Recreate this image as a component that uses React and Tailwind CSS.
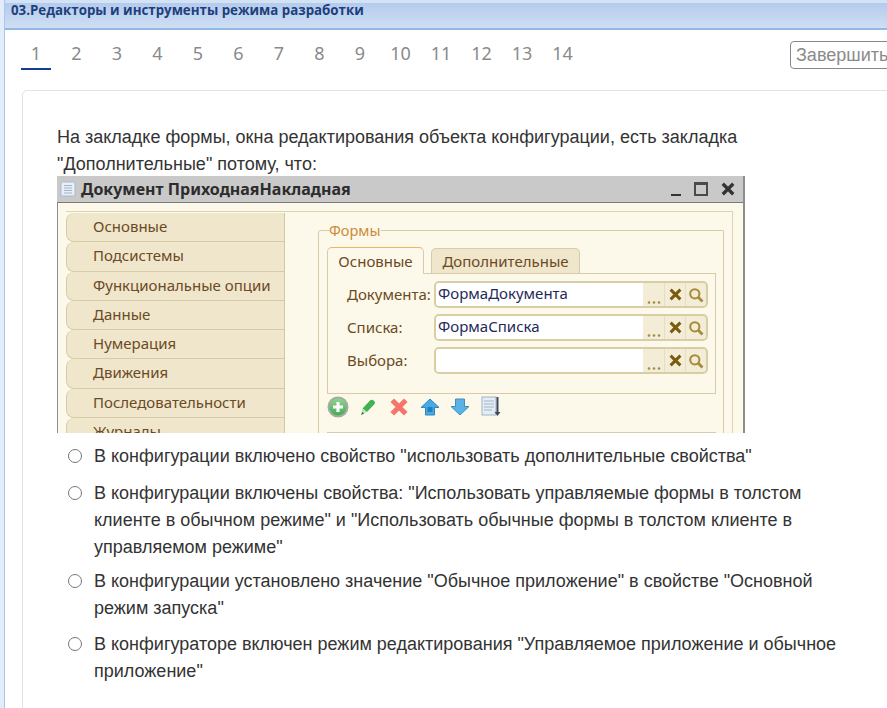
import React from "react";

const numbers = [1, 2, 3, 4, 5, 6, 7, 8, 9, 10, 11, 12, 13, 14];

const sections = [
  "Основные",
  "Подсистемы",
  "Функциональные опции",
  "Данные",
  "Нумерация",
  "Движения",
  "Последовательности",
  "Журналы",
];

const fields = [
  { label: "Документа:", value: "ФормаДокумента" },
  { label: "Списка:", value: "ФормаСписка" },
  { label: "Выбора:", value: "" },
];

const answers = [
  {
    gap: "mb-[10px]",
    lines: ['В конфигурации включено свойство "использовать дополнительные свойства"'],
  },
  {
    gap: "mb-[7px]",
    lines: [
      'В конфигурации включены свойства: "Использовать управляемые формы в толстом',
      'клиенте в обычном режиме" и "Использовать обычные формы в толстом клиенте в',
      'управляемом режиме"',
    ],
  },
  {
    gap: "mb-[9px]",
    lines: [
      'В конфигурации установлено значение "Обычное приложение" в свойстве "Основной',
      'режим запуска"',
    ],
  },
  {
    gap: "",
    lines: [
      'В конфигураторе включен режим редактирования "Управляемое приложение и обычное',
      'приложение"',
    ],
  },
];

const CloseMark = ({ className, width = 2.8 }) => (
  <svg viewBox="0 0 12 12" className={className}>
    <path d="M1.500 1.500l9 9M10.500 1.500l-9 9" stroke="currentColor" strokeWidth={width} fill="none" />
  </svg>
);

const Field = ({ label, value }) => (
  <div className="flex items-center h-[27px]">
    <span className="w-[106px] pl-[19px] text-[15px] text-[#6b4a24] whitespace-nowrap">{label}</span>
    <div className="flex w-[274px] h-[27px] border-2 border-[#d8cea6] rounded-[5px] bg-[#f3ecd6] overflow-hidden">
      <div className="w-[207px] bg-white pl-[2px] text-[15px] leading-[21px] text-[#1f2a5a]">
        {value}
      </div>
      <div className="w-[22px] flex items-end justify-center pb-[2px] border-r border-[#e6dec3]">
        <svg viewBox="0 0 14 3" className="w-[14px] h-[3px] text-[#a58c45]">
          <circle cx="2" cy="1.500" r="1.300" fill="currentColor" />
          <circle cx="7" cy="1.500" r="1.300" fill="currentColor" />
          <circle cx="12" cy="1.500" r="1.300" fill="currentColor" />
        </svg>
      </div>
      <div className="w-[21px] flex items-center justify-center border-r border-[#e6dec3]">
        <CloseMark className="w-[13px] h-[13px] text-[#7a5c10]" />
      </div>
      <div className="flex-1 flex items-center justify-center">
        <svg viewBox="0 0 16 16" className="w-[16px] h-[16px] text-[#a88a3c]">
          <circle cx="6.800" cy="6.800" r="4.600" stroke="currentColor" strokeWidth="2" fill="none" />
          <path d="M10 10l4.500 4.500" stroke="currentColor" strokeWidth="2.800" fill="none" />
        </svg>
      </div>
    </div>
  </div>
);

const Toolbar = () => (
  <div className="flex items-center h-[38px] pb-[13px]">
    <svg viewBox="0 0 22 22" className="w-[22px] h-[22px]">
      <defs>
        <linearGradient id="addFill" x1="0" y1="0" x2="0" y2="1">
          <stop offset="0" stopColor="#8fd48f" />
          <stop offset="1" stopColor="#45ab52" />
        </linearGradient>
      </defs>
      <circle cx="11" cy="11" r="10.500" fill="#a3ad9f" />
      <circle cx="11" cy="11" r="8.500" fill="url(#addFill)" />
      <path d="M11 6v10M6 11h10" stroke="#fff" strokeWidth="3.200" />
    </svg>
    <svg viewBox="0 0 18 18" className="w-[18px] h-[18px] ml-[10px]">
      <path d="M3.500 10.500L11 2.500c1-1 2-1 3.500 0s2 2.500 1 3.500L8 14z" fill="#3fb34f" />
      <path d="M3.500 10.500L8 14l-6 3z" fill="#bfe3b8" />
      <path d="M2 17l1.500-3 1.500 1.500z" fill="#1f6a2b" />
    </svg>
    <CloseMark className="w-[18px] h-[18px] ml-[13px] text-[#f6756b]" width={3.400} />
    <svg viewBox="0 0 20 18" className="w-[20px] h-[18px] ml-[12px]">
      <path d="M10 1l9 8.500h-4.500V17h-9V9.500H1z" fill="#49a9e4" stroke="#2f86ba" />
      <path d="M7.500 9h5v5h-5z" fill="#1f7fc4" />
    </svg>
    <svg viewBox="0 0 20 18" className="w-[20px] h-[18px] ml-[10px]">
      <path d="M10 17l9-8.500h-4.500V1h-9v7.500H1z" fill="#5bb2e8" stroke="#3d8fc2" />
    </svg>
    <svg viewBox="0 0 20 21" className="w-[20px] h-[21px] ml-[11px]">
      <rect x="1" y="1" width="14" height="18" fill="#e4edf5" stroke="#9fb1c4" />
      <path d="M3 5h10M3 8h10M3 11h10M3 14h8" stroke="#a3b5c8" />
      <path d="M16.500 1v16" stroke="#3d4a5a" strokeWidth="2" />
      <path d="M13.500 16h6l-3 4z" fill="#3d4a5a" />
    </svg>
  </div>
);

const ConfigWindow = () => (
  <div className="w-[688px] h-[257px] overflow-hidden border-r-2 border-[#8d8d8d] font-['Noto_Sans',sans-serif]">
    <div className="h-[27px] flex items-center bg-[#c9c9c9] border-b border-[#7b7b7b] pl-[3px] pr-[8px]">
      <svg viewBox="0 0 16 16" className="w-[16px] h-[16px]">
        <rect x="1" y="1" width="14" height="14" rx="1" fill="#e8eff6" stroke="#a9bbcc" />
        <path d="M4 4.500h8M4 7h8M4 9.500h8M4 12h8" stroke="#a2b4c6" />
      </svg>
      <span className="ml-[5px] text-[16px] font-bold text-[#2c2c2c] whitespace-nowrap">
        Документ ПриходнаяНакладная
      </span>
      <div className="ml-auto flex items-center gap-[13px]">
        <span className="w-[10px] h-[2px] mt-[12px] bg-[#333]" />
        <span className="w-[14px] h-[14px] border-2 border-t-[3px] border-[#4a4a4a]" />
        <CloseMark className="w-[14px] h-[14px] text-[#333]" />
      </div>
    </div>
    <div className="flex h-[230px] bg-[#fdf9ea] border-l border-[#8d8d8d] pl-[8px] pt-[8px] pr-[10px]">
      <div className="flex-1 flex border border-l-0 border-[#dcd3b0] border-b-0 pt-px">
        <ul className="w-[219px] shrink-0 border-r border-[#cfc6a4]">
          {sections.map((name) => (
            <li
              key={name}
              className="h-[29.300px] pl-[26px] text-[15px] leading-[26px] text-[#6b4a24] bg-[#efe6cc] border-l border-b border-[#d5cba8] rounded-l-[8px] whitespace-nowrap"
            >
              {name}
            </li>
          ))}
        </ul>
        <div className="flex-1 pl-[33px] pr-[8px] pt-[9px]">
          <fieldset className="border border-[#d6ccab] rounded-tl-[3px] pl-[8px] pr-[7px] h-[230px]">
            <legend className="ml-[2px] pr-[1px] text-[14.500px] leading-[16px] text-[#cc8a3a]">Формы</legend>
            <div className="flex items-end h-[26px] mt-[9px]">
              <span className="w-[97px] h-[27px] text-center text-[15px] leading-[26px] text-[#6b4a24] bg-[#fdf9ea] border border-b-0 border-[#d6ccab] border-t-[#e9b767] rounded-t-[5px] relative z-10 -mb-px">
                Основные
              </span>
              <span className="w-[149px] ml-[7px] h-[25px] text-center text-[15px] leading-[24px] text-[#6b4a24] bg-[#efe6cc] border border-b-0 border-[#d6ccab] rounded-t-[5px]">
                Дополнительные
              </span>
            </div>
            <div className="border border-[#d6ccab] h-[121px] pt-[7px] flex flex-col gap-[6px]">
              {fields.map((field) => (
                <Field key={field.label} {...field} />
              ))}
            </div>
            <Toolbar />
            <div className="border border-[#d6ccab] h-[60px] bg-[#fdf9ea]" />
          </fieldset>
        </div>
      </div>
    </div>
  </div>
);

export default function App() {
  return (
    <div className="h-[708px] w-[887px] overflow-hidden bg-[#e3ecfa] pl-[4px] font-['Liberation_Sans',sans-serif]">
      <div className="h-full bg-white border-l border-[#a9c6ed]">
        <div className="h-[30px] pl-[6px] bg-gradient-to-b from-[#b4cbec] to-[#cfdff3] border-t-[3px] border-t-[#d3e2f5] border-b-2 border-b-[#93b8e6] text-[13.300px] leading-[14px] font-bold text-[#1d3f7d] font-['Open_Sans',sans-serif]">
          03.Редакторы и инструменты режима разработки
        </div>

        <div className="flex items-start h-[60px] relative">
          <nav className="flex pt-[11px] pl-[16px]">
            {numbers.map((n) => (
              <span
                key={n}
                className={`w-[30px] mr-[10.500px] h-[29px] text-center text-[18px] leading-[24px] text-[#8a8a8a] font-['Noto_Sans',sans-serif] ${
                  n === 1 ? "border-b-2 border-[#143e91]" : ""
                }`}
              >
                {n}
              </span>
            ))}
          </nav>
          <button className="absolute left-[785px] top-[11px] w-[110px] h-[28px] text-left pl-[5px] border border-[#888] rounded-[4px] text-[18px] leading-[24px] text-[#8a8a8a] whitespace-nowrap">
            Завершить
          </button>
        </div>

        <div className="ml-[17px] w-[900px] h-[640px] border border-[#e3e3e3] rounded-[5px] pl-[34px] pt-[33px]">
          <p className="text-[18px] leading-[27px] text-[#333] -mb-[2px]">
            На закладке формы, окна редактирования объекта конфигурации, есть закладка
            <br />
            "Дополнительные" потому, что:
          </p>
          <ConfigWindow />
          <div className="mt-[10px] flex flex-col">
            {answers.map(({ gap, lines }) => (
              <label key={lines[0]} className={`flex items-start pl-[11px] ${gap}`}>
                <span className="w-[14px] h-[14px] mt-[6px] shrink-0 rounded-full border-[1.500px] border-[#767676] bg-white" />
                <span className="ml-[12px] text-[18px] leading-[27px] text-[#333] whitespace-nowrap">
                  {lines.map((line) => (
                    <span key={line} className="block">
                      {line}
                    </span>
                  ))}
                </span>
              </label>
            ))}
          </div>
        </div>
      </div>
    </div>
  );
}
